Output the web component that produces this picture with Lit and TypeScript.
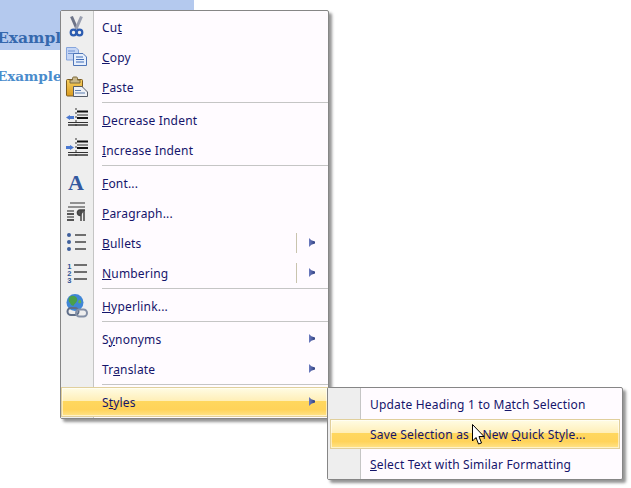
import { LitElement, html, css, svg } from "lit";
import { customElement } from "lit/decorators.js";

const icon = (body: unknown, w = 24, h = 24) =>
  html`<svg class="ic" width=${w} height=${h} viewBox="0 0 24 24">${body}</svg>`;

const lines = (rows: [number, number, number, string?, number?][]) =>
  rows.map(([x1, x2, y, c, t]) => svg`<path d="M${x1} ${y}H${x2}" stroke=${c || "#222"} stroke-width=${t || 1} fill="none"/>`);

const indent = svg`
  ${lines([[12, 23, 3.5, "#111", 2], [12, 23, 7, "#333", 1], [12, 23, 10, "#111", 2], [3, 23, 14.5, "#333", 1], [3, 23, 17, "#333", 1.5]])}
  <path d="M11 0V20" stroke="#333" stroke-width="1" stroke-dasharray="2 2"/>`;

const icons: Record<string, unknown> = {
  cut: icon(svg`
    <path d="M6.5 1.5 L12 14" stroke="#6d7488" stroke-width="3" fill="none"/>
    <path d="M16.5 1.5 L11 14" stroke="#9aa0b0" stroke-width="3" fill="none"/>
    <circle cx="8.5" cy="17.5" r="2.8" fill="none" stroke="#2c5cb0" stroke-width="2.2"/>
    <circle cx="14.5" cy="17.5" r="2.8" fill="none" stroke="#2c5cb0" stroke-width="2.2"/>`),
  copy: icon(svg`
    <path d="M1.5 2.5H11L13.5 5V15H1.5Z" fill="#c5d6f5" stroke="#86a5dc"/>
    <path d="M3 6H10M3 8.5H10" stroke="#6e92d2"/>
    <path d="M8.5 8.5H18L21.5 12V20.5H8.5Z" fill="#e6effc" stroke="#4f76b8"/>
    <path d="M11 12H18M11 14.5H19M11 17H19" stroke="#3f6cb8"/>`),
  paste: icon(svg`
    <defs><linearGradient id="gold" x1="0" x2="0" y1="0" y2="1"><stop offset="0" stop-color="#f7cf60"/><stop offset="1" stop-color="#d89a20"/></linearGradient></defs>
    <rect x="1.5" y="4.5" width="16" height="16.5" rx="1" fill="url(#gold)" stroke="#7c5c20"/>
    <path d="M7.5 5V3.2C7.5 2.5 8 2 9 2H11C12 2 12.5 2.5 12.5 3.2V5H15V8H5V5Z" fill="#c9b78a" stroke="#7c6a3a"/>
    <path d="M8.5 11.5H17L22.5 17V21.5H8.5Z" fill="#eef1f6" stroke="#555c68"/>
    <path d="M10 15.5H16M10 18H20" stroke="#5c7fb0"/>`),
  dec: icon(svg`${indent}<path d="M1 9.5L5 7V8H9V11H5V12Z" fill="#4a78d0"/>`),
  inc: icon(svg`${indent}<path d="M9 9.5L5 7V8H1V11H5V12Z" fill="#4a78d0"/>`),
  font: icon(svg`<text x="11" y="19" text-anchor="middle" font-family="Liberation Serif" font-weight="700" font-size="22" fill="#33599f">A</text>`),
  para: icon(svg`
    ${lines([[5, 20, 2, "#333", 1], [3, 20, 6, "#333", 1], [2, 9, 10, "#222", 1], [2, 9, 13, "#222", 1.5], [2, 9, 16, "#222", 1], [2, 9, 19, "#222", 1.5]])}
    <path d="M19 9V20M16 9V20M20 9H15C11.5 9 11.5 14.5 15.5 14.5" stroke="#444" stroke-width="1.5" fill="#555"/>`),
  bullets: icon(svg`
    <circle cx="4" cy="4" r="2" fill="#3e5f9c"/><circle cx="4" cy="11" r="2" fill="#3e5f9c"/><circle cx="4" cy="18" r="2" fill="#3e5f9c"/>
    ${lines([[10, 21, 4, "#444", 1.5], [10, 21, 11, "#444", 1.5], [10, 21, 18, "#444", 1.5]])}`),
  num: icon(svg`
    <text x="4.5" y="8" text-anchor="middle" font-family="Liberation Sans" font-weight="700" font-size="7.5" fill="#2f5597">1</text>
    <text x="4.5" y="14.8" text-anchor="middle" font-family="Liberation Sans" font-weight="700" font-size="7.5" fill="#2f5597">2</text>
    <text x="4.5" y="21.6" text-anchor="middle" font-family="Liberation Sans" font-weight="700" font-size="7.5" fill="#2f5597">3</text>
    ${lines([[9, 22, 4, "#444", 1.5], [9, 22, 11, "#444", 1.5], [9, 22, 18, "#444", 1.5]])}`),
  link: icon(svg`
    <circle cx="10" cy="8.5" r="8.5" fill="#3f86d6"/>
    <path d="M5 2.5C8 1 11 2 12 4.5C13 8 10 9 9 11C8 13 6 11 5 9C3 7 3 4.5 5 2.5Z" fill="#4aa04a"/>
    <path d="M14 6C15 5 17 7 16 9C15 10 13 9 13 8Z" fill="#5ab05a"/>
    <rect x="2.5" y="14" width="11" height="7" rx="3.5" fill="none" stroke="#5f6e88" stroke-width="2"/>
    <rect x="11" y="15.5" width="11" height="7" rx="3.5" fill="none" stroke="#8490a6" stroke-width="2"/>`),
};

const K = (t: string) => html`<u>${t}</u>`;

@customElement("app-root")
export class AppRoot extends LitElement {
  static styles = css`
    :host { display: block; position: relative; width: 631px; height: 488px; background: #fff; overflow: hidden; font-family: "Noto Sans", sans-serif; }
    .doc { font-family: "DejaVu Serif", serif; font-weight: 700; }
    .band { width: 194px; height: 50px; background: #b4c9ee; color: #3568ad; font-size: 15.5px; box-sizing: border-box; padding: 28px 0 0 0; line-height: 20px; text-indent: -3px; }
    .sub-h { color: #4a8ccc; font-size: 13.5px; line-height: 18px; margin-top: 17px; text-indent: -3px; }
    .menu { position: absolute; box-sizing: border-box; border: 1px solid #868686; background: #fffbff; padding: 1px 0; box-shadow: 3px 3px 3px rgba(0,0,0,.42); border-radius: 2px; color: #15156b; font-size: 12px; letter-spacing: .18px; }
    .menu::before { content: ""; position: absolute; left: 0; top: 0; bottom: 0; width: 32px; background: #eeeeee; border-right: 1px solid #c5c5c5; }
    .main { left: 60px; top: 10px; width: 269px; height: 409px; }
    .sub { left: 327px; top: 387px; width: 296px; height: 93px; }
    .row { position: relative; height: 30px; display: flex; align-items: center; padding-left: 41px; white-space: nowrap; box-sizing: border-box; }
    .sub .row { padding-left: 42px; }
    .ic { position: absolute; left: 4px; top: 3px; }
    .sep { position: relative; height: 3px; margin-left: 41px; }
    .sep::after { content: ""; display: block; height: 1px; background: #c5c5c5; }
    .bar { position: absolute; left: 235px; top: 5px; width: 1px; height: 20px; background: #c9c4ae; }
    .arrow { position: absolute; left: 248px; top: 10px; width: 6px; height: 9px; background: linear-gradient(90deg, #6c7cc0, #2f3f80); clip-path: polygon(0 0, 40% 25%, 100% 40%, 100% 60%, 40% 75%, 0 100%); }
    .hot { background: linear-gradient(#fffde8 0%, #ffefb8 45%, #ffd75e 48%, #ffd35a 75%, #ffe690 100%); outline: 1px solid #e0cf9c; outline-offset: -1px; box-shadow: inset 0 0 0 2px rgba(255,255,255,.55); }
    .main .hot { padding-left: 41px; }
    .sub .hot { margin: 0 2px; padding-left: 40px; }
    u { text-underline-offset: 1px; }
    .cursor { position: absolute; left: 471px; top: 424px; }
  `;

  private row(label: unknown, ic?: string, arrow = false, bar = false, hot = false) {
    return html`<div class="row ${hot ? "hot" : ""}">${ic ? icons[ic] : ""}<span>${label}</span>${bar ? html`<i class="bar"></i>` : ""}${arrow ? html`<i class="arrow"></i>` : ""}</div>`;
  }

  render() {
    const sep = html`<div class="sep"></div>`;
    return html`
      <div class="doc">
        <div class="band">Example</div>
        <div class="sub-h">Example</div>
      </div>
      <div class="menu main">
        ${this.row(html`Cu${K("t")}`, "cut")}
        ${this.row(html`${K("C")}opy`, "copy")}
        ${this.row(html`${K("P")}aste`, "paste")}
        ${sep}
        ${this.row(html`${K("D")}ecrease Indent`, "dec")}
        ${this.row(html`${K("I")}ncrease Indent`, "inc")}
        ${sep}
        ${this.row(html`${K("F")}ont...`, "font")}
        ${this.row(html`${K("P")}aragraph...`, "para")}
        ${this.row(html`${K("B")}ullets`, "bullets", true, true)}
        ${this.row(html`${K("N")}umbering`, "num", true, true)}
        ${sep}
        ${this.row(html`${K("H")}yperlink...`, "link")}
        ${sep}
        ${this.row(html`S${K("y")}nonyms`, undefined, true)}
        ${this.row(html`Tr${K("a")}nslate`, undefined, true)}
        ${sep}
        ${this.row(html`S${K("t")}yles`, undefined, true, false, true)}
      </div>
      <div class="menu sub">
        ${this.row(html`Update Heading 1 to M${K("a")}tch Selection`)}
        ${this.row(html`Save Selection as a New ${K("Q")}uick Style...`, undefined, false, false, true)}
        ${this.row(html`${K("S")}elect Text with Similar Formatting`)}
      </div>
      <svg class="cursor" width="14" height="22" viewBox="0 0 14 22">
        <path d="M1.5 .5V17L5 13.5L7.5 20L10.5 19L8 12.5H13Z" fill="#fff" stroke="#000" stroke-width="1"/>
      </svg>
    `;
  }
}
